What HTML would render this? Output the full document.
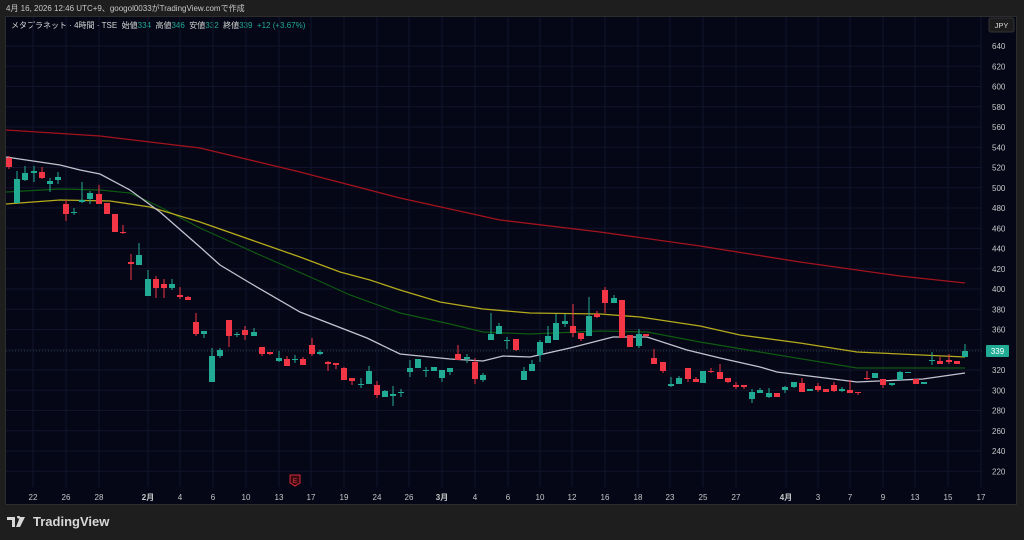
<!DOCTYPE html>
<html><head><meta charset="utf-8"><style>
body{margin:0;width:1024px;height:540px;background:#1e1e1e;overflow:hidden;font-family:"Liberation Sans","Noto Sans CJK JP",sans-serif;}
#top{position:absolute;left:6px;top:3px;font-size:8px;color:#c8c8c8;}
#pane{position:absolute;left:5px;top:16px;width:1012px;height:489px;background:#050716;border:1px solid #2c2c2c;box-sizing:border-box;}
#leg{position:absolute;left:11px;top:20px;font-size:8px;color:#d8d8d8;}
#leg .g{color:#22ab94}
#logo{position:absolute;left:7px;top:514px;color:#d8d8d8;font-size:13px;font-weight:bold;display:flex;align-items:center;gap:4px}
svg{position:absolute;left:0;top:0}
</style></head><body>
<div id="top">4月 16, 2026 12:46 UTC+9、googol0033がTradingView.comで作成</div>
<div id="pane"></div>
<div id="leg">メタプラネット · 4時間 · TSE &nbsp;始値<span class="g">334</span> &nbsp;高値<span class="g">346</span> &nbsp;安値<span class="g">332</span> &nbsp;終値<span class="g">339</span> &nbsp;<span class="g">+12 (+3.67%)</span></div>
<svg id="s" width="1024" height="540"></svg>
<div id="logo"><svg width="22" height="12" style="position:static"><path d="M0 1h8v10h-3v-7h-5z M10 1a1.5 1.5 0 1 1 0 .1z M13 1h5l-5 10h-4z" fill="#d8d8d8"/></svg>TradingView</div>
<script>
const s=document.getElementById('s');let h='';
const Y=p=>46+(640-p)*1.0125;
// grid
for(let p=220;p<=640;p+=20){let y=Y(p);h+=`<line x1="6" x2="982" y1="${y}" y2="${y}" stroke="#11142a" stroke-width="1"/>`;h+=`<text x="992" y="${y+3}" fill="#c8c8c8" font-size="8">${p}</text>`;}
const xl=[[33,'22'],[66,'26'],[99,'28'],[148,'2月'],[180,'4'],[213,'6'],[246,'10'],[279,'13'],[311,'17'],[344,'19'],[377,'24'],[409,'26'],[442,'3月'],[475,'4'],[508,'6'],[540,'10'],[572,'12'],[605,'16'],[638,'18'],[670,'23'],[703,'25'],[736,'27'],[786,'4月'],[818,'3'],[850,'7'],[883,'9'],[915,'13'],[948,'15'],[981,'17']];
xl.forEach(([x,t])=>{if(x<982)h+=`<line x1="${x}" x2="${x}" y1="17" y2="487" stroke="#11142a"/>`;h+=`<text x="${x}" y="500" fill="#c8c8c8" font-size="8" text-anchor="middle" ${t.includes('月')?'font-weight="bold"':''}>${t}</text>`;});
h+=`<rect x="989" y="18" width="25" height="14" rx="2" fill="#1c1c1c" stroke="#333"/><text x="1001.5" y="28" fill="#ddd" font-size="7.5" text-anchor="middle">JPY</text>`;
h+=`<line x1="6" x2="982" y1="351" y2="351" stroke="#2a3a40" stroke-dasharray="1,2"/>`;
const line=(pts,c,w)=>{h+=`<polyline fill="none" stroke="${c}" stroke-width="${w}" points="${pts.map(p=>p.join(',')).join(' ')}"/>`};
line([[6,130],[100,136],[200,148],[300,172],[400,198],[500,220],[600,232],[700,246],[800,262],[900,276],[965,283]],'#a3131d',1.3);
line([[6,192],[60,189],[100,190],[130,193],[160,207],[200,228],[260,255],[317,280],[350,295],[400,313],[450,324],[483,332],[530,334],[600,331],[647,332],[700,342],[760,352],[857,368],[965,368]],'#0f5a12',1.2);
line([[6,204],[60,200],[110,201],[150,207],[200,222],[260,243],[300,257],[340,272],[370,280],[400,290],[440,302],[483,309],[530,313],[600,314],[640,317],[700,326],[740,335],[800,343],[857,352],[965,357]],'#b5aa1c',1.3);
line([[6,157],[60,165],[80,170],[100,174],[130,190],[160,212],[200,247],[220,265],[250,283],[300,312],[367,338],[400,354],[450,359],[483,361],[503,356],[530,357],[570,348],[613,337],[647,337],[687,350],[720,358],[760,367],[777,372],[857,382],[923,379],[965,373]],'#c3c3d0',1.3);
// candles: x, bodyTop, bodyBot, wickTop, wickBot, g/r
const C=[[9,158,167,156,169,'r'],[17,179,203,171,203,'g'],[25,173,180,166,181,'g'],[34,171,173,166,182,'g'],[42,172,178,167,179,'r'],[50,181,184,178,192,'g'],[58,177,180,172,184,'g'],[66,204,214,200,221,'r'],[74,212,213,208,215,'g'],[82,200,202,182,203,'g'],[90,193,199,191,204,'g'],[99,194,204,185,204,'r'],[107,203,214,203,214,'r'],[115,214,232,214,232,'r'],[123,232,233,225,234,'r'],[131,262,264,254,280,'r'],[139,255,265,243,265,'g'],[148,279,296,270,296,'g'],[156,279,288,276,298,'r'],[164,284,288,279,298,'r'],[172,284,288,279,290,'g'],[180,295,297,287,299,'r'],[188,297,300,296,300,'r'],[196,322,334,313,336,'r'],[204,331,334,331,338,'g'],[212,356,382,348,382,'g'],[220,350,356,348,358,'g'],[229,320,336,320,347,'r'],[237,334,335,332,337,'g'],[245,330,335,326,340,'r'],
[254,332,336,328,336,'g'],[262,347,354,347,356,'r'],[270,352,354,352,355,'r'],[279,358,361,351,362,'g'],[287,359,366,356,366,'r'],[295,359,360,355,363,'g'],[303,359,365,357,365,'r'],[312,345,354,338,356,'r'],[320,352,354,350,355,'g'],[328,362,364,361,371,'r'],[336,363,365,363,369,'r'],[344,368,380,367,380,'r'],[352,378,381,378,385,'r'],[361,384,385,378,388,'g'],[369,371,384,366,384,'g'],[377,385,395,381,398,'r'],[385,391,397,390,397,'g'],[393,394,396,386,406,'g'],[401,392,393,389,397,'g'],[410,368,372,360,377,'g'],[418,359,368,359,368,'g'],[426,370,371,367,377,'g'],[434,367,371,367,371,'g'],[442,370,378,370,382,'g'],[450,368,372,368,375,'g'],[458,354,360,345,360,'r'],[467,357,359,354,363,'g'],[475,362,379,358,384,'r'],[483,375,380,373,382,'g'],[491,334,340,313,340,'g'],[499,326,334,323,334,'g'],[507,340,341,337,349,'g'],[516,339,350,339,351,'r'],
[524,371,380,367,380,'g'],[532,364,371,360,371,'g'],[540,342,355,340,362,'g'],[548,336,343,326,343,'g'],[556,323,340,314,340,'g'],[565,321,324,314,327,'g'],[573,326,333,304,337,'r'],[581,333,339,333,341,'r'],[589,316,336,297,336,'g'],[597,314,317,311,318,'r'],[605,290,303,287,313,'r'],[614,298,303,295,303,'g'],[622,300,338,300,338,'r'],[630,335,347,335,347,'r'],[639,334,346,329,348,'g'],[646,334,336,334,337,'r'],[654,358,364,349,364,'r'],[663,362,371,362,373,'r'],[671,384,386,377,387,'g'],[679,378,384,376,384,'g'],[688,368,379,368,382,'r'],[696,379,382,377,382,'r'],[703,371,383,371,383,'g'],[711,371,372,368,373,'r'],[720,372,379,364,379,'r'],[728,378,382,378,383,'r'],[736,385,387,382,389,'r'],[744,385,387,385,389,'r'],
[752,392,399,389,403,'g'],[760,390,393,388,393,'g'],[769,393,397,388,398,'g'],[777,393,397,393,397,'r'],[785,387,390,386,393,'g'],[794,382,387,382,388,'g'],[802,383,392,378,392,'r'],[810,389,391,389,391,'g'],[818,386,390,383,392,'r'],[826,389,392,389,392,'r'],[834,385,391,382,392,'r'],[842,389,391,387,392,'g'],[850,390,393,380,393,'r'],[858,392,393,392,395,'r'],[867,378,379,371,380,'r'],[875,373,378,373,378,'g'],[883,379,385,379,388,'r'],[892,383,385,383,386,'g'],[900,372,380,371,380,'g'],[908,372,373,372,373,'g'],[916,379,384,379,384,'r'],[924,382,384,382,384,'g'],[932,360,361,352,365,'g'],[940,361,364,357,364,'r'],[949,360,362,354,364,'r'],[957,361,364,361,364,'r'],[965,351,357,344,357,'g']];
C.forEach(([x,a,b,t,u,c])=>{const col=c=='g'?'#22ab94':'#f23645';h+=`<line x1="${x}" x2="${x}" y1="${t}" y2="${u}" stroke="${col}"/><rect x="${x-3}" y="${a}" width="6" height="${Math.max(1,b-a)}" fill="${col}"/>`;});
h+=`<rect x="986" y="345" width="23" height="12" rx="1" fill="#22ab94"/><text x="997.5" y="354" fill="#fff" font-size="8" text-anchor="middle">339</text>`;
h+=`<path d="M290 475h10v8l-5 3l-5-3z" fill="#3a0a10" stroke="#d42a3a"/><text x="295" y="483" fill="#f04050" font-size="6.5" text-anchor="middle">E</text>`;
s.innerHTML=h;
</script>
</body></html>
